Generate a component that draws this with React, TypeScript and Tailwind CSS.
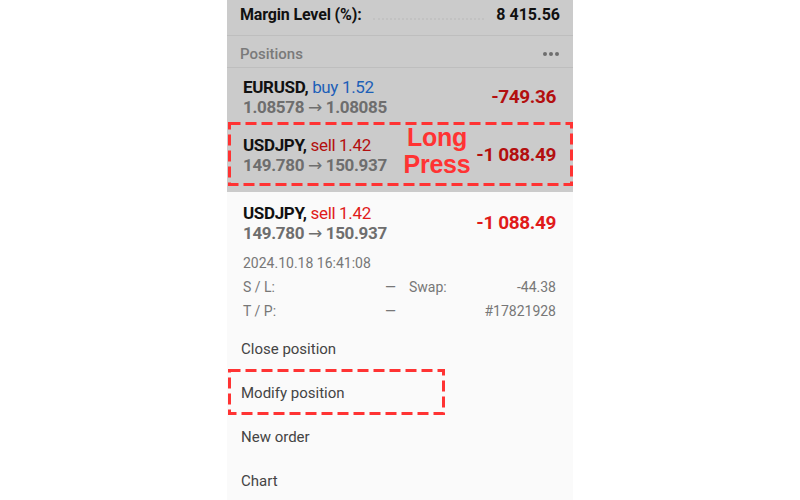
import React from 'react';

const roboto = { fontFamily: 'Roboto, "Liberation Sans", sans-serif' };

function DashedBox({ className }: { className: string }) {
  return (
    <div className={`pointer-events-none absolute ${className}`}>
      <svg width="100%" height="100%" className="block overflow-visible">
        <rect
          x="1.5"
          y="1.5"
          width="calc(100% - 3px)"
          height="calc(100% - 3px)"
          fill="none"
          stroke="#ff3333"
          strokeWidth="3"
          strokeDasharray="11 5"
        />
      </svg>
    </div>
  );
}

function Prices({ from, to }: { from: string; to: string }) {
  return (
    <>
      {from}{' '}
      <span className="font-normal" style={{ fontFamily: '"DejaVu Sans", sans-serif' }}>→</span>{' '}
      {to}
    </>
  );
}

function PositionRow({
  symbol, side, sideColor, from, to, profit, profitColor,
}: {
  symbol: string;
  side: string;
  sideColor: string;
  from: string;
  to: string;
  profit: string;
  profitColor: string;
}) {
  return (
    <div className="flex items-center justify-between pl-[16px] pr-[17px]">
      <div className="flex flex-col">
        <div className="text-[17px] leading-[20px] tracking-[-0.02em]">
          <span className="font-bold text-[#111]">{symbol},</span>{' '}
          <span className={sideColor}>{side}</span>
        </div>
        <div className="text-[17px] font-bold leading-[20px] tracking-[-0.02em] text-[#6e6e6e]">
          <Prices from={from} to={to} />
        </div>
      </div>
      <div className={`text-[19px] font-bold tracking-[-0.02em] ${profitColor}`}>{profit}</div>
    </div>
  );
}

export default function App() {
  return (
    <div className="flex h-[500px] w-[800px] justify-center overflow-hidden bg-white" style={roboto}>
      <div className="relative flex w-[346px] flex-col bg-[#fafafa]">
        {/* dimmed part */}
        <div className="flex flex-col bg-[#cbcbcb]">
          <div className="flex h-[36px] items-center border-b border-[#bebebe] pb-[6px] pl-[13px] pr-[13px]">
            <span className="text-[16px] font-bold tracking-[-0.01em] text-[#111]">Margin Level (%):</span>
            <span className="mx-[12px] mt-[8px] flex-1 border-b-2 border-dotted border-[#c2c2c2]" />
            <span className="text-[16px] font-bold text-[#111]">8 415.56</span>
          </div>
          <div className="flex h-[32px] items-center justify-between border-b border-[#bebebe] pl-[13px] pr-[14px] pt-[5px]">
            <span className="text-[15px] font-medium text-[#7a7a7a]">Positions</span>
            <span className="flex gap-[2px]">
              <span className="h-[4px] w-[4px] rounded-full bg-[#6e6e6e]" />
              <span className="h-[4px] w-[4px] rounded-full bg-[#6e6e6e]" />
              <span className="h-[4px] w-[4px] rounded-full bg-[#6e6e6e]" />
            </span>
          </div>
          <div className="h-[58px] pt-[9px]">
            <PositionRow
              symbol="EURUSD"
              side="buy 1.52"
              sideColor="text-[#1d5fb8]"
              from="1.08578"
              to="1.08085"
              profit="-749.36"
              profitColor="text-[#b30f0f]"
            />
          </div>
          <div className="h-[66px] pt-[9px]">
            <PositionRow
              symbol="USDJPY"
              side="sell 1.42"
              sideColor="text-[#b30f0f]"
              from="149.780"
              to="150.937"
              profit="-1 088.49"
              profitColor="text-[#b30f0f]"
            />
          </div>
        </div>

        {/* expanded position */}
        <div className="pt-[11px]">
          <PositionRow
            symbol="USDJPY"
            side="sell 1.42"
            sideColor="text-[#e01a1a]"
            from="149.780"
            to="150.937"
            profit="-1 088.49"
            profitColor="text-[#e01a1a]"
          />
        </div>
        <div className="mt-[8px] flex flex-col pl-[16px] pr-[17px] text-[14px] leading-[24px] text-[#777]">
          <div>2024.10.18 16:41:08</div>
          <div className="flex">
            <span className="w-[142px]">S / L:</span>
            <span className="w-[24px]">—</span>
            <span className="flex-1">Swap:</span>
            <span>-44.38</span>
          </div>
          <div className="flex">
            <span className="w-[142px]">T / P:</span>
            <span className="w-[24px]">—</span>
            <span className="flex-1" />
            <span>#17821928</span>
          </div>
        </div>
        <div className="mt-[4px] flex flex-col pl-[14px] text-[15px] text-[#444]">
          <div className="h-[44px] leading-[44px]">Close position</div>
          <div className="h-[44px] leading-[44px]">Modify position</div>
          <div className="h-[44px] leading-[44px]">New order</div>
          <div className="h-[44px] leading-[44px]">Chart</div>
        </div>

        {/* annotations */}
        <DashedBox className="left-[1px] top-[122px] h-[64px] w-[345px]" />
        <DashedBox className="left-[1px] top-[369px] h-[46px] w-[217px]" />
        <div
          className="pointer-events-none absolute left-[170px] top-[124px] w-[80px] text-center text-[25px] font-bold leading-[27px] tracking-[-0.01em] text-[#ff3333]"
          style={{ fontFamily: '"Liberation Sans", Arial, sans-serif' }}
        >
          Long
          <br />
          Press
        </div>
      </div>
    </div>
  );
}
